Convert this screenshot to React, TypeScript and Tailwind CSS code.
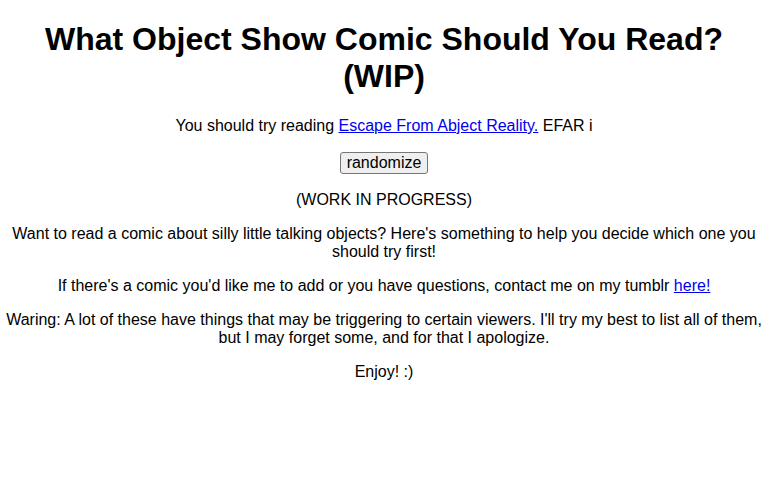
import React from "react";

export default function App() {
  return (
    <div className="min-h-[480px] bg-white px-1 text-center text-[16px] leading-[18px] text-black" style={{ fontFamily: '"Liberation Sans", Arial, sans-serif' }}>
      <div className="h-[21.44px]" />
      <h1 className="text-[32px] font-bold leading-[1.15]">What Object Show Comic Should You Read? (WIP)</h1>
      <p className="mt-[22px]">
        You should try reading{" "}
        <a href="#" className="text-[#0000ee] underline">Escape From Abject Reality.</a> EFAR i
      </p>
      <div className="mt-[17px]">
        <button className="rounded-[3px] border border-[#767676] bg-[#efefef] px-[6px] py-px text-[16px] leading-[18px] text-black">randomize</button>
      </div>
      <p className="mt-[17px]">(WORK IN PROGRESS)</p>
      <p className="mt-4">Want to read a comic about silly little talking objects? Here's something to help you decide which one you should try first!</p>
      <p className="mt-4">
        If there's a comic you'd like me to add or you have questions, contact me on my tumblr{" "}
        <a href="#" className="text-[#0000ee] underline">here!</a>
      </p>
      <p className="mt-4">Waring: A lot of these have things that may be triggering to certain viewers. I'll try my best to list all of them, but I may forget some, and for that I apologize.</p>
      <p className="mt-4">Enjoy! :)</p>
    </div>
  );
}
